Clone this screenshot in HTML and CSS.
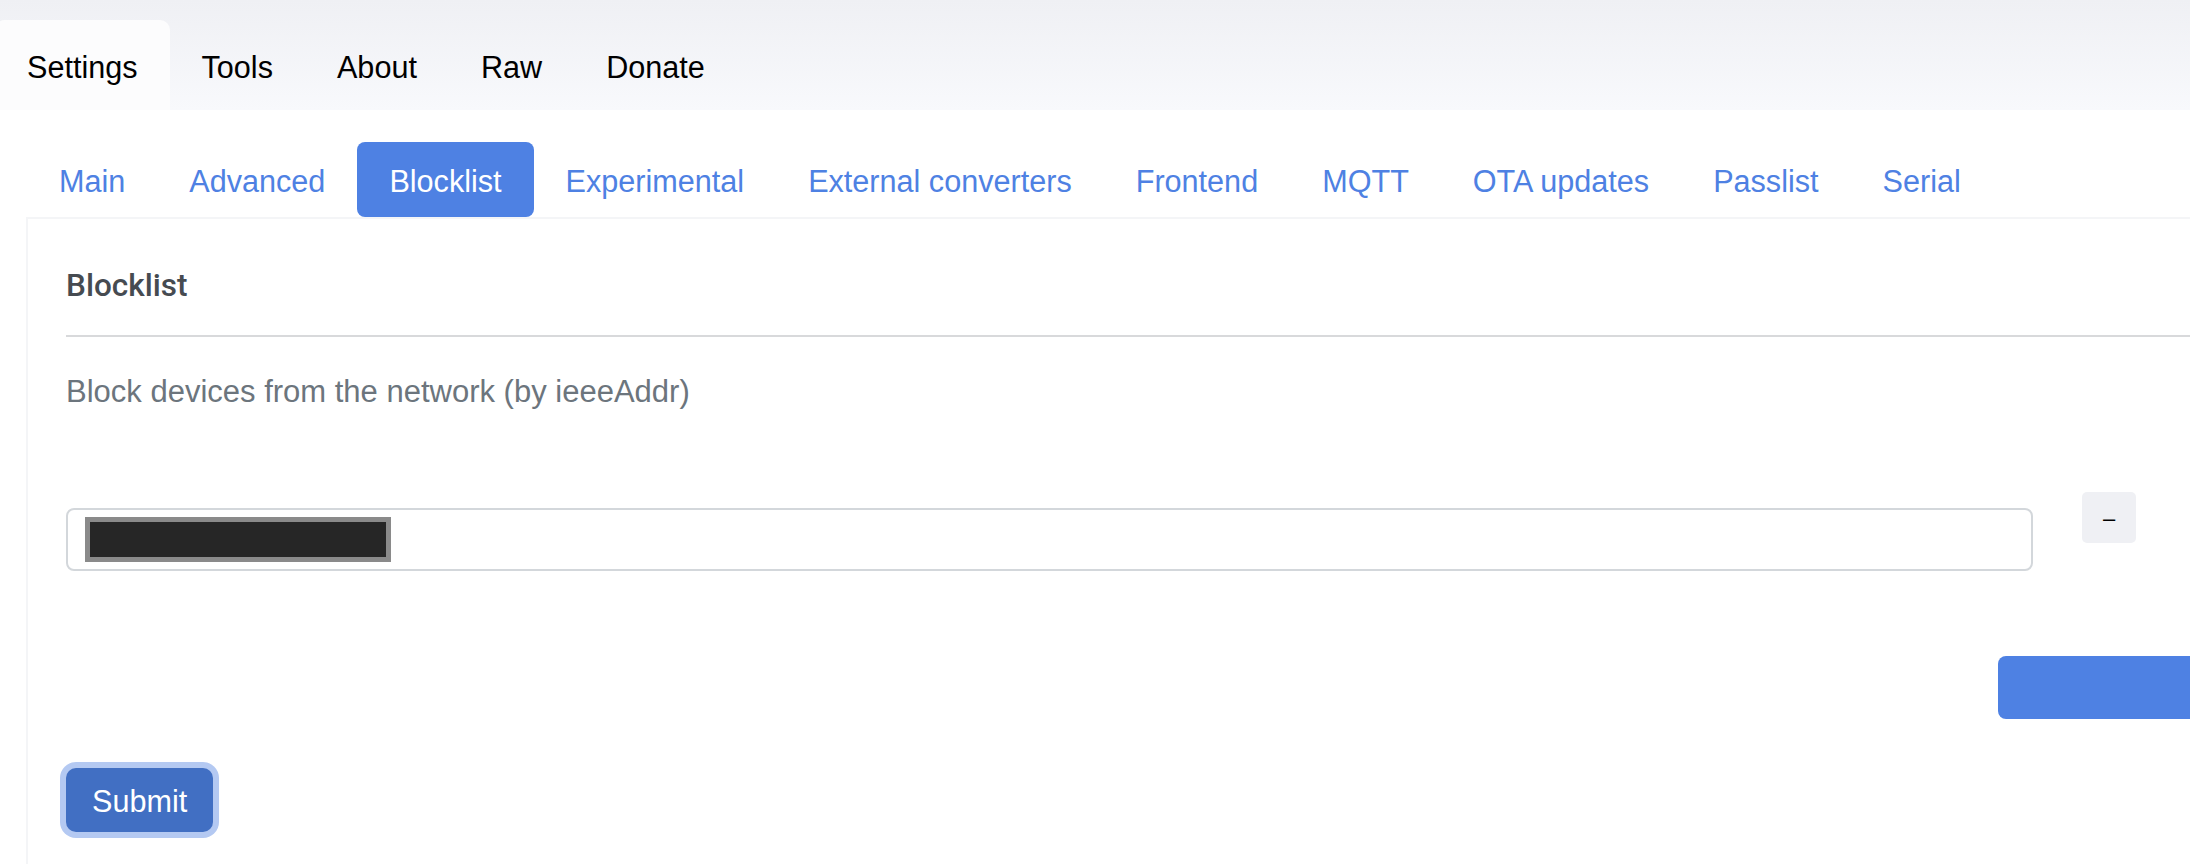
FILE: index.html
```html
<!DOCTYPE html>
<html lang="en">
<head>
<meta charset="utf-8">
<title>Settings - Blocklist</title>
<link rel="stylesheet" href="styles.css">
</head>
<body>
<header class="topbar">
  <ul class="topnav">
    <li><a class="active" href="#">Settings</a></li>
    <li><a href="#">Tools</a></li>
    <li><a href="#">About</a></li>
    <li><a href="#">Raw</a></li>
    <li><a href="#">Donate</a></li>
  </ul>
</header>
<ul class="tabs">
  <li><a href="#">Main</a></li>
  <li><a href="#">Advanced</a></li>
  <li><a class="active" href="#">Blocklist</a></li>
  <li><a href="#">Experimental</a></li>
  <li><a href="#">External converters</a></li>
  <li><a href="#">Frontend</a></li>
  <li><a href="#">MQTT</a></li>
  <li><a href="#">OTA updates</a></li>
  <li><a href="#">Passlist</a></li>
  <li><a href="#">Serial</a></li>
</ul>
<main class="card">
  <h5 class="legend">Blocklist</h5>
  <hr class="divider">
  <p class="description">Block devices from the network (by ieeeAddr)</p>
  <div class="item-row">
    <div class="field">
      <div class="form-control" role="textbox"><span class="redacted"></span></div>
    </div>
    <div class="toolbar">
      <button class="btn-remove" type="button">–</button>
    </div>
  </div>
  <div class="add-row">
    <button class="btn-add" type="button"></button>
  </div>
  <button class="btn-submit" type="submit">Submit</button>
</main>
</body>
</html>
```
FILE: styles.css
```css
html, body {
  overflow: hidden;
}
body {
  margin: 0;
  background: #ffffff;
  font-family: "Liberation Sans", Arial, sans-serif;
  font-size: 30.6px;
  line-height: 45px;
  color: #212529;
}
ul {
  list-style: none;
  margin: 0;
  padding: 0;
}
a {
  text-decoration: none;
}

/* top navigation */
.topbar {
  height: 110px;
  box-sizing: border-box;
  padding-top: 20px;
  background: linear-gradient(#eff0f4, #f8f9fc);
}
.topnav {
  display: flex;
  margin-left: -5px;
}
.topnav a {
  display: block;
  padding: 25px 32px 20px;
  color: #000000;
}
.topnav a.active {
  background: #fcfcfd;
  border-radius: 10px 10px 0 0;
}

/* settings sub tabs */
.tabs {
  display: flex;
  margin: 32px 0 0 27px;
}
.tabs a {
  display: block;
  padding: 17px 32px 13px;
  color: #4e81e3;
  border-radius: 8px;
}
.tabs a.active {
  background: #4e81e3;
  color: #ffffff;
}

/* card */
.card {
  margin-left: 26px;
  width: 2700px;
  min-height: 700px;
  box-sizing: border-box;
  border: 2px solid #f4f5f7;
  padding: 44px 0 0 38px;
}
.legend {
  margin: 0;
  font-family: Roboto, "Liberation Sans", Arial, sans-serif;
  font-size: 31.5px;
  font-weight: 500;
  color: #464b51;
}
.divider {
  margin: 27px 0 0;
  border: 0;
  border-top: 2px solid #d8d9db;
}
.description {
  margin: 32px 0 0;
  font-size: 31px;
  color: #6c757d;
}

.item-row {
  display: flex;
  align-items: flex-start;
  margin-top: 78px;
}
.field {
  width: 1967px;
  margin-top: 16px;
}
.form-control {
  height: 63px;
  box-sizing: border-box;
  border: 2px solid #d3d7db;
  border-radius: 8px;
  padding: 7px 17px;
  background: #ffffff;
}
.redacted {
  display: block;
  width: 306px;
  height: 45px;
  box-sizing: border-box;
  background: #262626;
  border: 5px solid #8a8a8a;
}
.toolbar {
  margin-left: 49px;
}
.btn-remove {
  display: block;
  width: 54px;
  height: 51px;
  padding: 3px 0 0;
  border: 0;
  border-radius: 5px;
  background: #eff0f4;
  color: #000000;
  font-family: "Liberation Sans", Arial, sans-serif;
  font-size: 22px;
  line-height: 48px;
}

.add-row {
  display: flex;
  margin-top: 85px;
}
.btn-add {
  margin-left: 1932px;
  width: 400px;
  height: 63px;
  border: 0;
  border-radius: 8px;
  background: #4e81e3;
}

.btn-submit {
  display: block;
  margin-top: 49px;
  height: 64px;
  padding: 3px 26px 0;
  border: 0;
  border-radius: 10px;
  background: #416fc3;
  box-shadow: 0 0 0 6px #b4c9f2;
  color: #ffffff;
  font-family: "Liberation Sans", Arial, sans-serif;
  font-size: 30.6px;
  line-height: 61px;
}
```
